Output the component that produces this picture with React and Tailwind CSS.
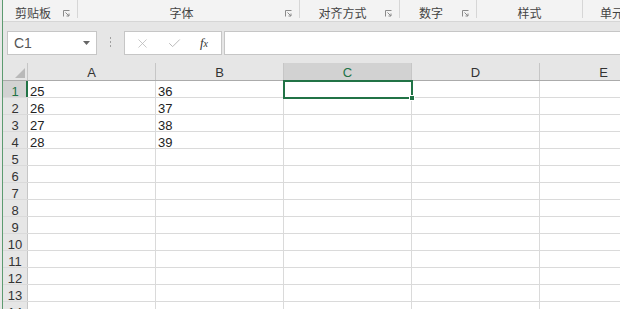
import React from "react";
import { X, Check } from "lucide-react";

const cols = ["A", "B", "C", "D", "E"];
const rows = [
  ["25", "36"],
  ["26", "37"],
  ["27", "38"],
  ["28", "39"],
];

const Launcher = () => (
  <svg width="7" height="7" viewBox="0 0 7 7" className="text-[#8a8a8a]">
    <path d="M0.5 6.5V0.5H6.5" fill="none" stroke="currentColor" strokeWidth="1" />
    <path d="M2.5 2.5L6 6M6 3.5V6H3.5" fill="none" stroke="currentColor" strokeWidth="1" />
  </svg>
);

function Group({ width, label, launcher, last }) {
  return (
    <div className="flex h-full shrink-0" style={{ width }}>
      <div className="flex flex-1 items-center justify-center pt-[4px] text-[12px] text-[#444]">
        {label}
      </div>
      {launcher && (
        <div className="flex w-[14px] items-end pb-[4px]">
          <Launcher />
        </div>
      )}
      {!last && <div className="h-[18px] w-px bg-[#d6d6d6]" />}
    </div>
  );
}

export default function App() {
  return (
    <div
      className="flex h-[309px] w-[620px] overflow-hidden bg-white"
      style={{ fontFamily: '"Liberation Sans", "Noto Sans CJK SC", sans-serif' }}
    >
      <div className="w-[2px] shrink-0 bg-[#e8e8e8]" />
      <div className="w-[1px] shrink-0 bg-[#5d9b70]" />
      <div className="flex min-w-0 flex-1 flex-col">
        {/* ribbon group labels */}
        <div
          className="flex h-[22px] shrink-0 overflow-hidden border-b border-[#d6d6d6] bg-[#f3f3f3]"
          style={{ fontFamily: '"Noto Sans CJK SC", sans-serif' }}
        >
          <Group width={75} label="剪贴板" launcher />
          <Group width={222} label="字体" launcher />
          <Group width={100} label="对齐方式" launcher />
          <Group width={77} label="数字" launcher />
          <Group width={106} label="样式" />
          <div className="flex h-full shrink-0 items-center whitespace-nowrap pl-[17px] pt-[4px] text-[12px] text-[#444]">
            单元格
          </div>
        </div>

        {/* formula bar */}
        <div className="flex h-[41px] shrink-0 items-start bg-[#e6e6e6] pt-[9px]">
          <div className="ml-[4px] flex h-[24px] w-[90px] items-center justify-between border border-[#c6c6c6] bg-white pl-[6px] pr-[6px]">
            <span className="text-[14px] text-[#555]">C1</span>
            <svg width="7" height="4" viewBox="0 0 7 4">
              <path d="M0 0H7L3.5 4Z" fill="#666" />
            </svg>
          </div>
          <div className="flex w-[27px] flex-col items-center gap-[2px] pt-[6px]">
            <div className="h-[2px] w-[1px] bg-[#a0a0a0]" />
            <div className="h-[2px] w-[1px] bg-[#a0a0a0]" />
            <div className="h-[2px] w-[1px] bg-[#a0a0a0]" />
          </div>
          <div className="flex h-[24px] w-[98px] items-center border border-[#c6c6c6] bg-white">
            <div className="flex w-[34px] justify-center pl-[1px]">
              <X size={15} strokeWidth={1.2} color="#b5b5b5" />
            </div>
            <div className="flex w-[30px] justify-center">
              <Check size={15} strokeWidth={1.5} color="#b5b5b5" />
            </div>
            <div
              className="flex w-[30px] justify-center text-[13px] italic text-[#333]"
              style={{ fontFamily: '"Liberation Serif", serif' }}
            >
              f<span className="mt-[3px] text-[10px]">x</span>
            </div>
          </div>
          <div className="ml-[2px] h-[24px] flex-1 border border-r-0 border-[#c6c6c6] bg-white" />
        </div>

        {/* grid */}
        <div className="relative flex-1">
          <div className="flex h-[18px] border-b border-[#ababab] bg-[#e6e6e6]">
            <div className="flex w-[25px] shrink-0 items-end justify-end border-r border-[#c6c6c6] bg-[#e6e6e6] pb-[2px] pr-[2px]">
              <svg width="10" height="10" viewBox="0 0 10 10">
                <path d="M10 0V10H0Z" fill="#b9b9b9" />
              </svg>
            </div>
            {cols.map((c) => (
              <div
                key={c}
                className={`flex w-[128px] shrink-0 items-center justify-center border-r border-[#c6c6c6] pt-[2px] text-[13px] ${
                  c === "C" ? "bg-[#d2d2d2] text-[#217346]" : "text-[#333]"
                }`}
              >
                {c}
              </div>
            ))}
          </div>
          {Array.from({ length: 14 }, (_, i) => (
            <div key={i} className="flex h-[17px] border-b border-[#dadada]">
              <div
                className={`flex w-[25px] shrink-0 items-center justify-center pt-[4px] text-[13px] leading-[13px] ${
                  i === 0
                    ? "border-r-2 border-[#217346] bg-[#d2d2d2] pl-[1px] text-[#217346]"
                    : "border-r border-[#c6c6c6] bg-[#e6e6e6] text-[#333]"
                }`}
              >
                {i + 1}
              </div>
              {cols.map((c, j) => (
                <div
                  key={c}
                  className="flex w-[128px] shrink-0 items-center border-r border-[#dadada] pl-[2px] pt-[4px] text-[13px] leading-[13px] text-[#222]"
                >
                  {rows[i] && rows[i][j]}
                </div>
              ))}
            </div>
          ))}
          {/* selected cell C1 */}
          <div className="absolute left-[280px] top-[17px] h-[19px] w-[130px] border-2 border-[#217346]">
            <div className="absolute -bottom-[4px] -right-[4px] h-[6px] w-[6px] border border-white bg-[#217346]" />
          </div>
        </div>
      </div>
    </div>
  );
}
